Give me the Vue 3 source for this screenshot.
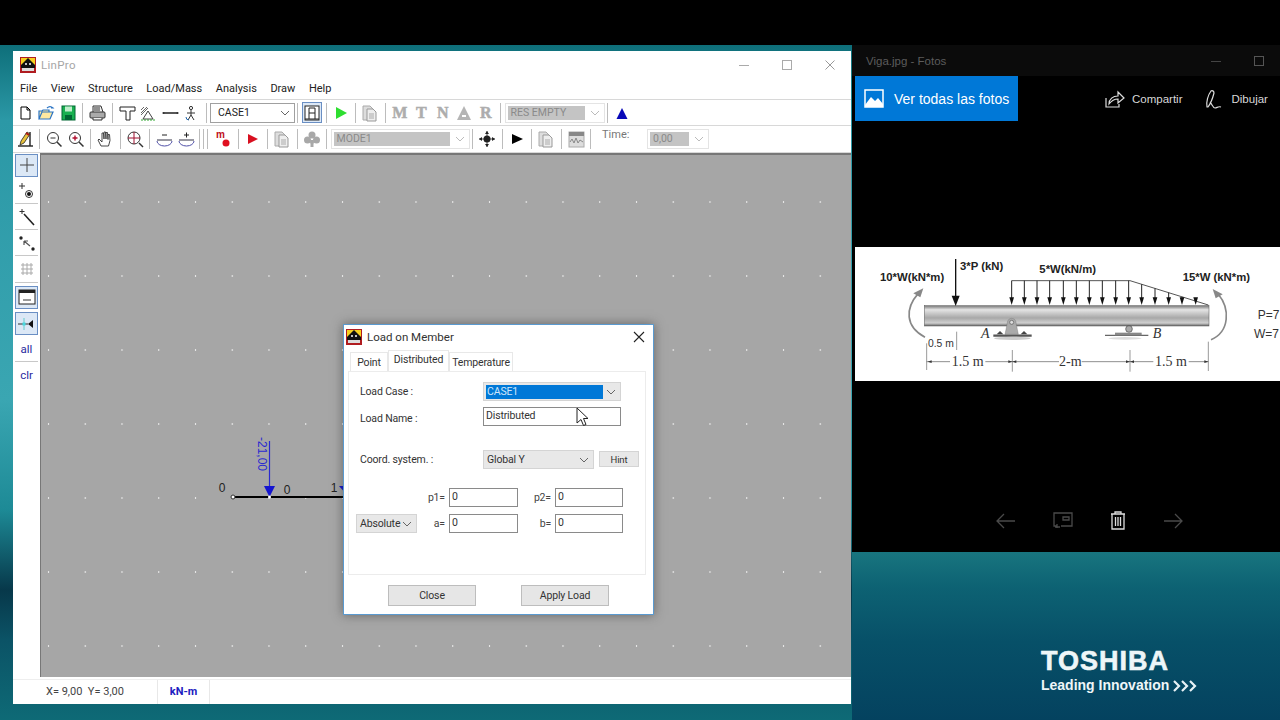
<script setup>
const icons = {
  doc: '<path d="M6 4h6l3 3v9H6z" fill="#fff" stroke="#000"/><path d="M12 4v3h3" fill="none" stroke="#000"/>',
  open: '<path d="M3 16V8h3l1-1h6v2H6l-3 7h11l3-7H6" fill="#ffe9a0" stroke="#2b74c4" stroke-width="1.2"/><path d="M11 5c2-2 4-2 6 0l-2 0" fill="none" stroke="#2b74c4" stroke-width="1.2"/>',
  save: '<rect x="4" y="3" width="13" height="14" fill="#18b050" stroke="#063"/><rect x="7" y="3.5" width="7" height="5" fill="#bfeecb"/><rect x="7" y="12" width="7" height="5" fill="#063"/>',
  print: '<path d="M6 9V3h8l2 6" fill="#eee" stroke="#333"/><rect x="3" y="9" width="15" height="6" rx="1" fill="#aaa" stroke="#333"/><path d="M6 15v2h9v-2" fill="#eee" stroke="#333"/><path d="M7 5h6M7 7h6" stroke="#333"/>',
  tee: '<path d="M3 4h15v4h-5v9H9V8H3z" fill="#fff" stroke="#222"/>',
  load: '<path d="M3 7l3-3M3 10l6-6M10 5l-7 7" stroke="#555" stroke-width=".9"/><path d="M5 16l5-8 5 8z" fill="#fff" stroke="#444"/><path d="M3 17h14" stroke="#3a3" stroke-dasharray="2 1" stroke-width="1.2"/>',
  member: '<path d="M3 10h15" stroke="#444" stroke-width="1.8"/><circle cx="3.5" cy="10" r="1.1" fill="#333"/><circle cx="17.5" cy="10" r="1.1" fill="#333"/>',
  person: '<circle cx="10" cy="5" r="1.6" fill="none" stroke="#333"/><path d="M6 10h8M10 7v5M7 17l3-5 3 5" fill="none" stroke="#333"/><path d="M5 14a3 3 0 0 0 3 3" fill="none" stroke="#26a"/>',
  frame: '<rect x="3" y="3" width="14" height="14" fill="#fff" stroke="#222"/><path d="M7 16V5h6v11M7 10h6M3 16h14" fill="none" stroke="#222"/>',
  playGreen: '<path d="M5 4l11 6-11 6z" fill="#2ede30"/>',
  pages: '<path d="M3 3h7l3 3v11H3z" fill="#ddd" stroke="#aaa"/><path d="M7 6h6l3 3v9H7z" fill="#eee" stroke="#999"/><path d="M9 11h5M9 13h5M9 15h5" stroke="#aaa"/>',
  tri: '<path d="M10 3l7 14H3z" fill="#b5b5b5"/><path d="M8 13h4" stroke="#fff" stroke-width="2"/>',
  triBlue: '<path d="M10 5l5.5 11h-11z" fill="#0808b8"/>',
  pen: '<path d="M3 17h15" stroke="#222" stroke-width="1.4"/><path d="M15 3v14" stroke="#222" stroke-width="1.4"/><path d="M5 16l1-4 6-9 3 2-6 9z" fill="#e8c23c" stroke="#222" stroke-width=".8"/><path d="M11 4l3 2" stroke="#b01818" stroke-width="2"/>',
  zoomOut: '<circle cx="9" cy="9" r="5.5" fill="#fff" stroke="#333"/><path d="M6.5 9h5" stroke="#333"/><path d="M13 13l4.5 4.5" stroke="#333" stroke-width="1.5"/>',
  zoomIn: '<circle cx="9" cy="9" r="5.5" fill="#fff" stroke="#333"/><path d="M6.5 9h5M9 6.5v5" stroke="#b01030" stroke-width="1.4"/><path d="M13 13l4.5 4.5" stroke="#333" stroke-width="1.5"/>',
  hand: '<path d="M6 17l-3-6 1-1 3 3V4h1.500l.5 6V3h1.500l.5 7V3.500h1.500l.5 7V5.500h1.500l.5 6-1.500 5.500z" fill="#fff" stroke="#333" stroke-width=".9"/>',
  zoomAll: '<circle cx="9" cy="9" r="6" fill="#fff" stroke="#333"/><path d="M9 3v12M3 9h12" stroke="#a01030"/><path d="M14 14l4 4" stroke="#333" stroke-width="1.5"/>',
  bowlMinus: '<path d="M3 11h15" stroke="#334"/><path d="M3 12a7.5 5 0 0 0 15 0" fill="none" stroke="#5050a8"/><path d="M8 6h5" stroke="#222"/>',
  bowlPlus: '<path d="M3 11h15" stroke="#334"/><path d="M3 12a7.5 5 0 0 0 15 0" fill="none" stroke="#5050a8"/><path d="M8 6h5M10.5 3.5v5" stroke="#222"/>',
  massDot: '<circle cx="13" cy="14" r="3.5" fill="#e01020"/><text x="3" y="9" font-family="Liberation Sans" font-weight="700" font-size="10" fill="#c01020">m</text>',
  playRed: '<path d="M5 5l10 5-10 5z" fill="#d81020"/>',
  club: '<circle cx="10" cy="6" r="3.5" fill="#a8a8a8"/><circle cx="5.5" cy="11" r="3.5" fill="#a8a8a8"/><circle cx="14.5" cy="11" r="3.5" fill="#a8a8a8"/><circle cx="10" cy="13" r="2" fill="#a8a8a8"/><path d="M10 11v7" stroke="#a8a8a8" stroke-width="3"/>',
  move: '<circle cx="10" cy="10" r="3.5" fill="#222"/><path d="M10 2l2 3H8zM10 18l2-3H8zM2 10l3-2v4zM18 10l-3-2v4z" fill="#222"/><path d="M10 2v16M2 10h16" stroke="#222" stroke-width=".8"/>',
  playBlack: '<path d="M5 5l11 5-11 5z" fill="#000"/>',
  wave: '<rect x="3" y="3" width="15" height="15" fill="#ddd" stroke="#aaa"/><rect x="3" y="3" width="15" height="4" fill="#888"/><path d="M4 13l2-3 2 4 2-5 2 5 2-3 3 2" fill="none" stroke="#888"/>',
  cross: '<path d="M10 3v14M3 10h14" stroke="#444"/>',
  addNode: '<path d="M5 2v6M2 5h6" stroke="#333"/><circle cx="12" cy="13" r="3.5" fill="#fff" stroke="#333"/><circle cx="12" cy="13" r="2" fill="#111"/>',
  addMember: '<path d="M5 2v5M2.5 4.500h5" stroke="#333"/><path d="M7 7l10 11" stroke="#222" stroke-width="1.6"/>',
  moveNode: '<circle cx="4" cy="5" r="1.7" fill="#222"/><circle cx="16" cy="16" r="1.7" fill="#222"/><path d="M7 8l6 5M7 8v4M7 8h4" fill="none" stroke="#555" stroke-width="1.2"/>',
  grid: '<path d="M6 4v12M10 4v12M14 4v12M4 6h12M4 10h12M4 14h12" stroke="#aaa"/>',
  window: '<rect x="2" y="3" width="16" height="14" fill="#fff" stroke="#222"/><rect x="2" y="3" width="16" height="3" fill="#222"/><path d="M6 12h8v2H6z" fill="#999"/>',
  snap: '<path d="M1 11h10" stroke="#333"/><path d="M7 5v12" stroke="#6cc"/><rect x="5.5" y="9.5" width="3" height="3" fill="#46d8e0"/><path d="M11 11l5-4v8z" fill="#111"/>',
}

const menus = ['File', 'View', 'Structure', 'Load/Mass', 'Analysis', 'Draw', 'Help']

const rowOne = [
  { icon: 'doc' }, { icon: 'open' }, { icon: 'save' }, { sep: true },
  { icon: 'print' }, { sep: true },
  { icon: 'tee' }, { icon: 'load' }, { icon: 'member' }, { icon: 'person' }, { sep: true },
  { combo: 'CASE1', w: 85, live: true },
  { sep: true, tight: true },
  { icon: 'frame', on: true }, { sep: true },
  { icon: 'playGreen' }, { sep: true },
  { icon: 'pages' }, { sep: true },
  { letter: 'M' }, { letter: 'T' }, { letter: 'N' }, { icon: 'tri' }, { letter: 'R' }, { sep: true },
  { combo: 'RES EMPTY', w: 100 },
  { sep: true, tight: true },
  { icon: 'triBlue' },
]

const rowTwo = [
  { icon: 'pen' }, { sep: true },
  { icon: 'zoomOut' }, { icon: 'zoomIn' }, { sep: true },
  { icon: 'hand' }, { sep: true },
  { icon: 'zoomAll' }, { sep: true },
  { icon: 'bowlMinus' }, { icon: 'bowlPlus' }, { triple: true },
  { icon: 'massDot' }, { sep: true },
  { icon: 'playRed' }, { sep: true },
  { icon: 'pages' }, { sep: true },
  { icon: 'club' }, { sep: true },
  { combo: 'MODE1', w: 139 },
  { sep: true, tight: true },
  { icon: 'move' }, { sep: true },
  { icon: 'playBlack' }, { sep: true },
  { icon: 'pages' }, { sep: true },
  { icon: 'wave' }, { sep: true },
  { time: true },
  { combo: '0,00', w: 62 },
]

const sideTools = [
  { icon: 'cross', on: true }, { icon: 'addNode' }, { icon: 'addMember' }, { icon: 'moveNode' },
  { icon: 'grid' }, { icon: 'window', on: true }, { icon: 'snap', on: true },
  { label: 'all' }, { label: 'clr' },
]

// distributed load arrows on the beam picture
const beamArrows = [470, 508, 546, 584, 625, 664, 703, 742, 782, 821, 860, 900, 941, 981, 1022].map((x) => ({
  x,
  top: x <= 825 ? 107 : 107 + ((x - 825) / 235) * 73,
}))
</script>

<template>
  <div class="desktop">
    <!-- LinPro main window -->
    <section class="linpro">
      <header class="titlebar">
        <svg class="app-icon" width="16" height="16" viewBox="0 0 16 16">
          <rect width="16" height="16" fill="#b01c20" />
          <path d="M1 1h14v10H1z" fill="#f6d020" />
          <path d="M8 1l7 7v3H1V8z" fill="#111" />
          <rect x="2" y="11" width="12" height="3" fill="#ddd" />
          <circle cx="6" cy="7" r="1" fill="#fff" /><circle cx="10" cy="7" r="1" fill="#fff" />
        </svg>
        <span class="app-name">LinPro</span>
        <span class="win-buttons">
          <svg width="12" height="12" viewBox="0 0 12 12"><path d="M1 6.5h10" stroke="#aaa" /></svg>
          <svg width="12" height="12" viewBox="0 0 12 12"><rect x="1.5" y="1.5" width="9" height="9" fill="none" stroke="#aaa" /></svg>
          <svg width="12" height="12" viewBox="0 0 12 12"><path d="M1.5 1.5l9 9M10.5 1.5l-9 9" stroke="#999" /></svg>
        </span>
      </header>

      <nav class="menubar">
        <span v-for="m in menus" :key="m">{{ m }}</span>
      </nav>

      <div v-for="(row, r) in [rowOne, rowTwo]" :key="r" class="toolbar">
        <template v-for="(item, i) in row" :key="i">
          <i v-if="item.sep" class="sep" :class="{ tight: item.tight }"></i>
          <span v-else-if="item.triple" class="triple"><i></i><i></i><i></i></span>
          <span v-else-if="item.time" class="time">Time:</span>
          <span v-else-if="item.letter" class="tool letter">{{ item.letter }}</span>
          <span v-else-if="item.combo" class="combo" :class="{ live: item.live }" :style="{ width: item.w + 'px' }">
            <span class="combo-text">{{ item.combo }}</span>
            <svg width="10" height="6" viewBox="0 0 10 6"><path d="M1 1l4 4 4-4" fill="none" :stroke="item.live ? '#666' : '#bbb'" /></svg>
          </span>
          <span v-else class="tool" :class="{ on: item.on }">
            <svg width="20" height="20" viewBox="0 0 20 20" v-html="icons[item.icon]"></svg>
          </span>
        </template>
      </div>

      <div class="workarea">
        <aside class="sidebar">
          <span v-for="(t, i) in sideTools" :key="i" class="side-tool" :class="{ on: t.on }">
            <svg v-if="t.icon" width="20" height="20" viewBox="0 0 20 20" v-html="icons[t.icon]"></svg>
            <template v-else>{{ t.label }}</template>
          </span>
        </aside>
        <div class="canvas">
          <svg class="model" width="140" height="80" viewBox="210 430 140 80">
            <path d="M233 497H345" stroke="#000" stroke-width="2" />
            <circle cx="233" cy="497" r="2" fill="#fff" stroke="#333" />
            <path d="M269.5 441V486" stroke="#2a2ad0" stroke-width="1.2" />
            <path d="M264 486h11l-5.5 11z" fill="#1414d0" />
            <circle cx="269.5" cy="497" r="1.5" fill="#fff" />
            <path d="M339 486h8v9z" fill="#1414d0" />
            <text class="model-text" x="222" y="492" text-anchor="middle">0</text>
            <text class="model-text" x="287" y="494" text-anchor="middle">0</text>
            <text class="model-text" x="334" y="492" text-anchor="middle">1</text>
            <text class="model-load" transform="translate(258 437) rotate(90)">-21,00</text>
          </svg>
        </div>
      </div>

      <footer class="statusbar">
        <span class="status-xy">X= 9,00&nbsp; Y= 3,00</span>
        <span class="status-unit">kN-m</span>
      </footer>
    </section>

    <!-- Load on Member dialog -->
    <section class="dialog">
      <header class="dialog-title">
        <svg width="16" height="16" viewBox="0 0 16 16">
          <rect width="16" height="16" fill="#b01c20" />
          <path d="M1 1h14v10H1z" fill="#f6d020" />
          <path d="M8 1l7 7v3H1V8z" fill="#111" />
          <rect x="2" y="11" width="12" height="3" fill="#ddd" />
          <circle cx="6" cy="7" r="1" fill="#fff" /><circle cx="10" cy="7" r="1" fill="#fff" />
        </svg>
        <span>Load on Member</span>
        <svg class="dialog-close" width="12" height="12" viewBox="0 0 12 12"><path d="M1 1l10 10M11 1L1 11" stroke="#222" stroke-width="1.1" /></svg>
      </header>

      <div class="tabs">
        <span class="tab point">Point</span>
        <span class="tab active">Distributed</span>
        <span class="tab temp">Temperature</span>
      </div>

      <div class="panel">
        <div class="form-row">
          <label>Load Case :</label>
          <span class="select case">
            <span class="select-value">CASE1</span>
            <svg width="10" height="6" viewBox="0 0 10 6"><path d="M1 1l4 4 4-4" fill="none" stroke="#666" /></svg>
          </span>
        </div>
        <div class="form-row second">
          <label class="low">Load Name :</label>
          <span class="input wide">Distributed</span>
        </div>
        <div class="form-row third">
          <label>Coord. system. :</label>
          <span class="select coord">
            <span>Global Y</span>
            <svg width="10" height="6" viewBox="0 0 10 6"><path d="M1 1l4 4 4-4" fill="none" stroke="#666" /></svg>
          </span>
          <span class="hint">Hint</span>
        </div>
        <div class="values">
          <span></span>
          <span class="eq">p1=</span><span class="input">0</span>
          <span class="eq">p2=</span><span class="input">0</span>
          <span class="select abs">
            <span>Absolute</span>
            <svg width="10" height="6" viewBox="0 0 10 6"><path d="M1 1l4 4 4-4" fill="none" stroke="#666" /></svg>
          </span>
          <span class="eq">a=</span><span class="input">0</span>
          <span class="eq">b=</span><span class="input">0</span>
        </div>
      </div>

      <div class="dialog-actions">
        <span class="button">Close</span>
        <span class="button">Apply Load</span>
      </div>
    </section>

    <svg class="cursor" width="14" height="20" viewBox="0 0 14 20">
      <path d="M1 1v15l4-3.500 2.500 6 2.500-1-2.500-6H12z" fill="#fff" stroke="#222" />
    </svg>

    <!-- Photos window -->
    <section class="photos">
      <header class="photos-title">
        <span>Viga.jpg - Fotos</span>
        <span class="photos-buttons">
          <svg width="12" height="12" viewBox="0 0 12 12"><path d="M1 6.5h10" stroke="#444" /></svg>
          <svg width="12" height="12" viewBox="0 0 12 12"><rect x="1.5" y="1.5" width="9" height="9" fill="none" stroke="#555" /></svg>
        </span>
      </header>
      <div class="photos-bar">
        <span class="all-photos">
          <svg width="20" height="19" viewBox="0 0 20 19">
            <rect x="1" y="1" width="18" height="17" fill="none" stroke="#fff" stroke-width="1.5" />
            <path d="M1 16l6-8 4 4 3-3 5 6v3H1z" fill="#fff" />
          </svg>
          Ver todas las fotos
        </span>
        <span class="photo-action share">
          <svg width="20" height="18" viewBox="0 0 20 18">
            <path d="M1 8v9h13v-3" fill="none" stroke="#ddd" stroke-width="1.2" />
            <path d="M4 14c0-5 4-8 9-8V2l6 6-6 5V9c-3 0-6 1-9 5z" fill="none" stroke="#ddd" stroke-width="1.2" />
          </svg>
          Compartir
        </span>
        <span class="photo-action draw">
          <svg width="20" height="22" viewBox="0 0 20 22">
            <path d="M3 19c-1-5 1-12 4-16 1-1 3 0 3 2-1 4-3 10-6 14zM6 14c2 2 3 6 5 6s3-2 6-1" fill="none" stroke="#ddd" stroke-width="1.2" />
          </svg>
          Dibujar
        </span>
      </div>

      <div class="picture">
        <svg width="425" height="134" viewBox="0 6 1275 402">
          <defs>
            <linearGradient id="steel" x1="0" x2="0" y1="0" y2="1">
              <stop offset="0" stop-color="#777" />
              <stop offset="0.2" stop-color="#e4e4e4" />
              <stop offset="0.6" stop-color="#a8a8a8" />
              <stop offset="0.85" stop-color="#cfcfcf" />
              <stop offset="1" stop-color="#666" />
            </linearGradient>
          </defs>
          <rect width="1275" height="402" y="6" fill="#fff" />
          <rect x="208" y="182" width="854" height="61" fill="url(#steel)" stroke="#555" stroke-width="1.5" />
          <path d="M302 42V160" stroke="#111" stroke-width="4" />
          <path d="M290 152h24l-12 31z" fill="#111" />
          <path d="M470 107H825L1060 180" fill="none" stroke="#333" stroke-width="2.5" />
          <g v-for="a in beamArrows" :key="a.x">
            <path :d="`M${a.x} ${a.top}V165`" stroke="#222" stroke-width="3" />
            <path :d="`M${a.x - 7} 157h14l-7 23z`" fill="#111" />
          </g>
          <path d="M210 277C150 245 150 190 190 145" fill="none" stroke="#888" stroke-width="5" />
          <path d="M205 130l-30 15 21 12z" fill="#888" />
          <path d="M1068 284C1125 260 1125 190 1090 148" fill="none" stroke="#888" stroke-width="5" />
          <path d="M1073 132l30 16-21 12z" fill="#888" />
          <path d="M450 268l8-40a13 13 0 0 1 24 0l8 40z" fill="#aaa" stroke="#666" />
          <circle cx="470" cy="232" r="6" fill="#ddd" stroke="#555" stroke-width="2" />
          <path d="M415 272h115" stroke="#555" stroke-width="7" />
          <path d="M425 268l10-10 10 10zM497 268l10-10 10 10z" fill="#444" />
          <ellipse cx="472" cy="280" rx="55" ry="5" fill="#ccc" />
          <circle cx="822" cy="252" r="10" fill="#aaa" stroke="#444" stroke-width="2" />
          <path d="M750 271H880" stroke="#666" stroke-width="4" />
          <rect x="780" y="263" width="80" height="8" fill="#888" />
          <ellipse cx="810" cy="280" rx="50" ry="4" fill="#ddd" />
          <text class="fig-serif italic" x="378" y="279">A</text>
          <text class="fig-serif italic" x="893" y="279">B</text>
          <text class="fig-sans" x="315" y="76">3*P (kN)</text>
          <text class="fig-sans" x="553" y="84">5*W(kN/m)</text>
          <text class="fig-sans" x="75" y="109">10*W(kN*m)</text>
          <text class="fig-sans" x="983" y="109">15*W (kN*m)</text>
          <path d="M305 260V315M215 295V375M472 315V380M825 315V380M1060 290V378" fill="none" stroke="#555" stroke-width="1.8" />
          <path d="M215 350H1060" stroke="#444" stroke-width="1.8" />
          <path d="M218 350l12-4v8zM472 350l-12-4v8zM472 350l12-4v8zM825 350l-12-4v8zM825 350l12-4v8zM1060 350l-12-4v8z" fill="#333" />
          <rect x="285" y="334" width="106" height="32" fill="#fff" />
          <rect x="612" y="334" width="68" height="32" fill="#fff" />
          <rect x="895" y="334" width="106" height="32" fill="#fff" />
          <text class="fig-serif" x="338" y="363" text-anchor="middle">1.5 m</text>
          <text class="fig-serif" x="646" y="363" text-anchor="middle">2-m</text>
          <text class="fig-serif" x="948" y="363" text-anchor="middle">1.5 m</text>
          <text class="fig-plain small" x="219" y="306">0.5 m</text>
          <text class="fig-plain" x="1208" y="223">P=7</text>
          <text class="fig-plain" x="1197" y="278">W=7</text>
        </svg>
      </div>

      <div class="photos-nav">
        <svg width="20" height="16" viewBox="0 0 20 16"><path d="M19 8H1M8 1L1 8l7 7" fill="none" stroke="#4a4a4a" stroke-width="1.3" /></svg>
        <svg width="20" height="18" viewBox="0 0 20 18"><path d="M4 14H1V1h18v13H8M10 5h6v3h-6zM4 12v4M2 15h5" fill="none" stroke="#4a4a4a" stroke-width="1.3" /></svg>
        <svg width="16" height="19" viewBox="0 0 16 19"><path d="M1 3h14M5 3V1h6v2M2 3v15h12V3M5.5 6v9M8 6v9M10.5 6v9" fill="none" stroke="#ddd" stroke-width="1.3" /></svg>
        <svg width="20" height="16" viewBox="0 0 20 16"><path d="M1 8h18M12 1l7 7-7 7" fill="none" stroke="#4a4a4a" stroke-width="1.3" /></svg>
      </div>
    </section>

    <div class="brand">
      <div class="brand-name">TOSHIBA</div>
      <div class="brand-line">
        Leading Innovation
        <svg width="24" height="12" viewBox="0 0 24 12"><path d="M1 1l5 5-5 5M9 1l5 5-5 5M17 1l5 5-5 5" fill="none" stroke="#e8f2f6" stroke-width="2.2" /></svg>
      </div>
    </div>
  </div>
</template>

<style scoped>
.desktop {
  position: relative;
  width: 1280px;
  height: 720px;
  overflow: hidden;
  background:
    linear-gradient(#000 45px, transparent 45px),
    linear-gradient(180deg, #0e6f7a 45px, #2b98a6 120px, #3aa6b2 400px, #1d8a96 510px, #07384a 590px, #0b5366 640px, #0e6a76 720px);
  font-family: Roboto, "Liberation Sans", sans-serif;
  color: #222;
}
.desktop::after {
  content: "";
  position: absolute;
  left: 852px;
  right: 0;
  top: 552px;
  bottom: 0;
  background: linear-gradient(180deg, #18757f 0, #0d6273 35px, #075068 90px, #04425f 168px);
}

/* LinPro window */
.linpro {
  position: absolute;
  left: 13px;
  top: 51px;
  width: 838px;
  height: 653px;
  background: #fff;
  display: flex;
  flex-direction: column;
}
.titlebar {
  height: 27px;
  display: flex;
  align-items: center;
  padding-left: 7px;
  flex: none;
}
.app-name {
  margin-left: 5px;
  font-size: 11.5px;
  color: #a6a6a6;
  letter-spacing: 0.3px;
}
.win-buttons {
  margin-left: auto;
  display: flex;
  gap: 31px;
  padding-right: 15px;
}
.menubar {
  height: 21px;
  display: flex;
  align-items: center;
  gap: 13.5px;
  padding-left: 7px;
  font-size: 11px;
  color: #222;
  flex: none;
}
.toolbar {
  height: 26px;
  border-top: 1px solid #d8d8d8;
  box-sizing: border-box;
  display: flex;
  align-items: center;
  flex: none;
  padding-left: 1px;
}
.tool {
  width: 21.5px;
  height: 20px;
  display: flex;
  align-items: center;
  justify-content: center;
  flex: none;
}
.tool.on {
  width: 20px;
  height: 21px;
  background: #dce8f6;
  outline: 1px solid #6a8fc4;
  outline-offset: -1px;
}
.letter {
  font-family: "Liberation Serif", serif;
  font-weight: 700;
  font-size: 16px;
  color: #adadad;
  -webkit-text-stroke: 0.5px #adadad;
}
.sep {
  width: 1px;
  height: 20px;
  background: #bcbcbc;
  margin: 0 3.5px;
  flex: none;
}
.sep.tight {
  margin: 0 4px 0 2px;
}
.triple {
  display: flex;
  gap: 3px;
  margin: 0 5px 0 2px;
  flex: none;
}
.triple i {
  width: 1px;
  height: 20px;
  background: #bcbcbc;
}
.time {
  font-size: 11px;
  color: #777;
  margin: -9px 21px 0 7.5px;
  width: 24px;
  flex: none;
}
.combo {
  height: 20px;
  box-sizing: border-box;
  border: 1px solid #e4e4e4;
  padding: 2px 4px 2px 2px;
  display: flex;
  align-items: center;
  flex: none;
  font-size: 10.5px;
  gap: 5px;
}
.combo-text {
  flex: 1;
  height: 14px;
  line-height: 14px;
  background: #c4c4c4;
  color: #8a8a8a;
  padding-left: 3px;
}
.combo.live {
  border-color: #a0a0a0;
  color: #222;
}
.combo.live .combo-text {
  background: #fff;
  color: #222;
  padding-left: 5px;
}
.workarea {
  flex: 1;
  display: flex;
  min-height: 0;
  margin-top: 1px;
  border-top: 1px solid #d8d8d8;
}
.sidebar {
  width: 27px;
  flex: none;
  display: flex;
  flex-direction: column;
  margin-top: -1px;
  align-items: center;
}
.side-tool {
  width: 23px;
  height: 26px;
  display: flex;
  align-items: center;
  justify-content: center;
  box-sizing: border-box;
  border-bottom: 1px solid #c8c8c8;
  font-size: 11.5px;
  color: #2a2aa0;
  flex: none;
}
.side-tool:nth-child(5) {
  height: 27px;
}
.side-tool.on {
  height: 23px;
  margin: 1.5px 0;
  background: #dce8f6;
  border: 1px solid #6a8fc4;
}
.side-tool:nth-child(6) {
  margin-top: 2.5px;
}
.side-tool:last-child {
  border-bottom: 0;
}
.canvas {
  flex: 1;
  position: relative;
  margin-bottom: 2px;
  border-top: 2px solid #777;
  border-left: 1px solid #777;
  background-color: #a6a6a6;
  background-image: radial-gradient(circle at 7.5px 47px, #e8e8e8 0.7px, transparent 1.1px);
  background-size: 36.75px 74px;
}
.model {
  position: absolute;
  left: 169px;
  top: 275px;
}
.model-text {
  font-family: "Liberation Sans", sans-serif;
  font-size: 12px;
  fill: #222;
}
.model-load {
  font-family: "Liberation Sans", sans-serif;
  font-size: 12px;
  fill: #2a2ad0;
}
.statusbar {
  height: 24px;
  flex: none;
  display: flex;
  align-items: center;
  font-size: 11px;
  border-top: 1px solid #eee;
}
.status-xy {
  width: 145px;
  padding-left: 33px;
  box-sizing: border-box;
  color: #444;
  height: 100%;
  line-height: 24px;
  border-right: 1px solid #e8e8e8;
}
.status-unit {
  width: 51px;
  text-align: center;
  font-weight: 700;
  font-size: 11px;
  color: #2020c0;
  height: 100%;
  line-height: 24px;
  border-right: 1px solid #e8e8e8;
  flex: none;
}

/* dialog */
.dialog {
  position: absolute;
  left: 343px;
  top: 324px;
  width: 311px;
  height: 291px;
  box-sizing: border-box;
  background: #fff;
  border: 1px solid #5a9ad0;
  box-shadow: 0 0 10px rgba(40, 40, 40, 0.5);
  display: flex;
  flex-direction: column;
  font-size: 10.5px;
  letter-spacing: -0.15px;
  color: #333;
}
.dialog-title {
  height: 23px;
  margin-bottom: 2px;
  display: flex;
  align-items: center;
  padding: 0 8px 0 2px;
  gap: 5px;
  font-size: 11.5px;
  letter-spacing: 0;
  color: #333;
  flex: none;
}
.dialog-close {
  margin-left: auto;
}
.tabs {
  display: flex;
  height: 21px;
  padding-left: 6px;
  align-items: flex-end;
  flex: none;
}
.tab {
  height: 19px;
  line-height: 20px;
  box-sizing: border-box;
  border: 1px solid #e8e8e8;
  border-bottom: 0;
  text-align: center;
  flex: none;
}
.point {
  width: 38px;
}
.temp {
  width: 64px;
}
.tab.active {
  height: 21px;
  line-height: 18px;
  width: 61px;
}
.panel {
  margin: 0 7px 0 4px;
  height: 204px;
  border: 1px solid #ececec;
  box-sizing: border-box;
  padding: 10px 0 0 7px;
  flex: none;
}
.form-row {
  display: flex;
  align-items: center;
  padding-left: 4px;
  height: 19px;
}
.form-row label {
  width: 123px;
  flex: none;
}
.form-row .low {
  padding-top: 4px;
}
.second {
  margin-top: 6px;
}
.third {
  margin-top: 24px;
}
.select {
  height: 19px;
  box-sizing: border-box;
  background: #e8e8e8;
  border: 1px solid #d4d4d4;
  display: flex;
  align-items: center;
  justify-content: space-between;
  padding: 0 4px 0 3px;
  flex: none;
}
.case {
  width: 138px;
  padding-left: 2px;
}
.select-value {
  width: 116px;
  height: 14px;
  line-height: 14px;
  background: #0078d7;
  color: #cfe6fa;
  padding-left: 1px;
}
.coord {
  width: 111px;
}
.abs {
  width: 100%;
  box-sizing: border-box;
}
.hint {
  margin: -2px 0 0 5px;
  width: 40px;
  height: 16px;
  line-height: 15px;
  box-sizing: border-box;
  border: 1px solid #d4d4d4;
  background: #e8e8e8;
  text-align: center;
  font-size: 9.5px;
}
.input {
  height: 19px;
  line-height: 16px;
  box-sizing: border-box;
  border: 1px solid #8a8a8a;
  padding-left: 2px;
  background: #fff;
}
.input.wide {
  width: 138px;
  flex: none;
}
.values {
  margin-top: 19px;
  display: grid;
  grid-template-columns: 61px 32px 69px 37px 68px;
  row-gap: 7px;
  align-items: center;
}
.eq {
  text-align: right;
  padding-right: 4px;
  color: #444;
}
.dialog-actions {
  display: flex;
  gap: 45px;
  padding: 10px 0 0 44px;
}
.button {
  width: 88px;
  height: 21px;
  line-height: 19px;
  box-sizing: border-box;
  border: 1px solid #bdbdbd;
  background: #e6e6e6;
  text-align: center;
}
.cursor {
  position: absolute;
  left: 576px;
  top: 407px;
}

/* Photos window */
.photos {
  position: absolute;
  left: 852px;
  top: 45px;
  width: 428px;
  height: 507px;
  background: #000;
  padding-left: 3px;
  box-sizing: border-box;
  z-index: 1;
}
.photos-title {
  height: 31px;
  background: #0b0b0b;
  margin-left: -3px;
  padding-left: 14px;
  display: flex;
  align-items: center;
  justify-content: space-between;
  font-family: "Liberation Sans", sans-serif;
  font-size: 11.5px;
  color: #5c5c5c;
}
.photos-buttons {
  display: flex;
  gap: 31px;
  padding-right: 15px;
}
.photos-bar {
  height: 45px;
  display: flex;
  align-items: center;
  font-family: "Liberation Sans", sans-serif;
}
.all-photos {
  width: 163px;
  height: 100%;
  background: #0078d7;
  color: #fff;
  font-size: 14px;
  display: flex;
  align-items: center;
  gap: 10px;
  padding-left: 9px;
  box-sizing: border-box;
  flex: none;
}
.photo-action {
  display: flex;
  align-items: center;
  gap: 7px;
  font-size: 11.5px;
  color: #d8d8d8;
}
.share {
  margin-left: 87px;
}
.draw {
  margin-left: 22px;
}
.picture {
  margin-top: 126px;
  height: 134px;
  overflow: hidden;
}
.picture svg {
  display: block;
}
.fig-sans {
  font-family: "Liberation Sans", sans-serif;
  font-weight: 700;
  font-size: 34px;
  fill: #222;
}
.fig-plain {
  font-family: "Liberation Sans", sans-serif;
  font-size: 36px;
  fill: #333;
}
.fig-plain.small {
  font-size: 31px;
}
.fig-serif {
  font-family: "Liberation Serif", serif;
  font-size: 42px;
  fill: #333;
}
.fig-serif.italic {
  font-style: italic;
}
.photos-nav {
  margin-top: 130px;
  display: flex;
  align-items: center;
  justify-content: space-between;
  padding: 0 97px 0 141px;
}
.brand {
  position: absolute;
  left: 1041px;
  top: 646px;
  z-index: 1;
  color: #eef6f8;
  font-family: "Liberation Sans", sans-serif;
}
.brand-name {
  font-weight: 700;
  font-size: 27px;
  line-height: 31px;
  letter-spacing: 1px;
  -webkit-text-stroke: 0.6px #eef6f8;
}
.brand-line {
  display: flex;
  align-items: center;
  gap: 4px;
  font-weight: 700;
  font-size: 14px;
  line-height: 17px;
}
</style>

<style>
body {
  background: #000;
}
</style>
